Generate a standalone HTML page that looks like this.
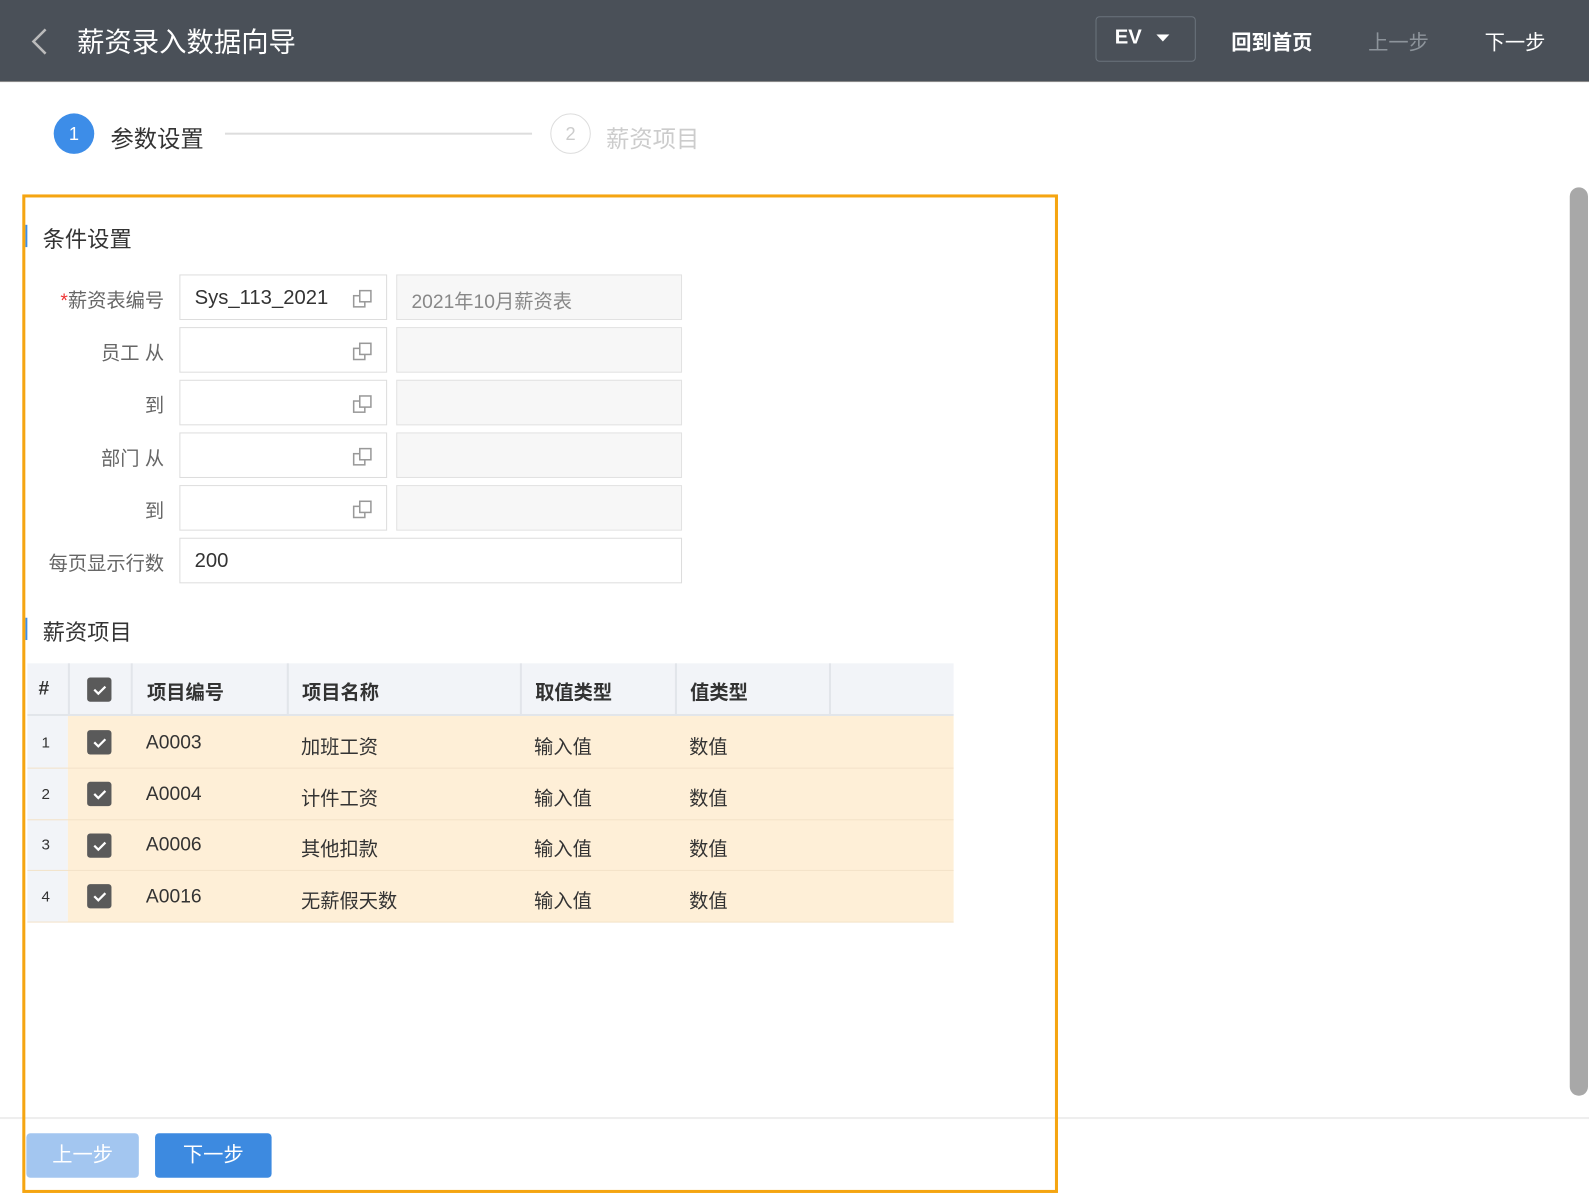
<!DOCTYPE html>
<html><head><meta charset="utf-8"><style>
html,body{margin:0;padding:0;width:1589px;height:1195px;overflow:hidden;background:#fff}
#w{position:absolute;left:0;top:0;width:1568px;height:1180px;transform:scale(1.0134,1.0127);transform-origin:0 0;font-family:"Liberation Sans","Noto Sans CJK SC",sans-serif;color:#333}
.a{position:absolute}
.hdr{left:0;top:0;width:1568px;height:80px;background:#4a5058;border-bottom:1px solid #888}
.ht{color:#fff;font-size:20px;top:26px}
.lbl{font-size:19px;color:#666;right:1406px;text-align:right;white-space:nowrap}
.in{border:1px solid #ddd;background:#fff;height:43px;box-sizing:border-box}
.in2{border:1px solid #e2e2e2;background:#f7f7f7;height:45px;box-sizing:border-box;width:282px;left:391px}
.cp{position:absolute;right:12px;top:13px;width:22px;height:20px}
.sec{font-size:22px;color:#333}
.bar{width:2px;height:22px;background:#3d8de8}
.cb{width:24px;height:24px;border-radius:3px;background:#5a5a5a}
.cell{font-size:19px;color:#333}
</style></head><body><div id="w">
<div class="a hdr"></div>
<svg class="a" style="left:28px;top:26px" width="22" height="30" viewBox="0 0 22 30"><path d="M17 3 L5 15 L17 27" stroke="#bbb" stroke-width="2.5" fill="none"/></svg>
<div class="a" style="left:76px;top:20px;color:#fff;font-size:27px">薪资录入数据向导</div>
<div class="a" style="left:1081px;top:16px;width:97px;height:43px;border:1px solid #6b737c;border-radius:4px"></div>
<div class="a ht" style="left:1100px;font-weight:bold">EV</div>
<svg class="a" style="left:1141px;top:34px" width="14" height="8"><path d="M0 0H13L6.5 7Z" fill="#fff"/></svg>
<div class="a ht" style="left:1215px;font-weight:bold">回到首页</div>
<div class="a ht" style="left:1350px;color:#8d949b">上一步</div>
<div class="a ht" style="left:1465px">下一步</div>

<div class="a" style="left:53px;top:112px;width:40px;height:40px;border-radius:50%;background:#3d8de8;color:#fff;font-size:18px;text-align:center;line-height:40px">1</div>
<div class="a" style="left:109px;top:118px;font-size:23px;color:#333">参数设置</div>
<div class="a" style="left:222px;top:131px;width:303px;height:2px;background:#ddd"></div>
<div class="a" style="left:543px;top:112px;width:38px;height:38px;border-radius:50%;border:1px solid #ddd;color:#ccc;font-size:18px;text-align:center;line-height:38px">2</div>
<div class="a" style="left:598px;top:118px;font-size:23px;color:#ccc">薪资项目</div>

<div class="a" style="left:1549px;top:185px;width:18px;height:897px;border-radius:9px;background:#a8a8a8"></div>
<div class="a" style="left:0;top:1103px;width:1568px;height:2px;background:#eee"></div>

<div class="a bar" style="left:25px;top:222px"></div>
<div class="a sec" style="left:42px;top:219px">条件设置</div>

<div class="a lbl" style="top:282px"><span style="color:#e33">*</span>薪资表编号</div>
<div class="a in" style="left:177px;top:271px;width:205px;height:45px"><span class="a" style="left:14px;top:11px;font-size:20px;color:#333">Sys_113_2021</span><svg class="cp" viewBox="0 0 22 20"><rect x="2" y="7" width="11" height="11" fill="none" stroke="#999" stroke-width="1.5"/><rect x="8" y="2" width="11" height="11" fill="#fff" stroke="#999" stroke-width="1.5"/></svg></div>
<div class="a in2" style="top:271px"><span class="a" style="left:14px;top:11px;font-size:19px;color:#888">2021年10月薪资表</span></div>

<div class="a lbl" style="top:334px">员工 从</div>
<div class="a in" style="left:177px;top:323px;width:205px;height:45px"><svg class="cp" viewBox="0 0 22 20"><rect x="2" y="7" width="11" height="11" fill="none" stroke="#999" stroke-width="1.5"/><rect x="8" y="2" width="11" height="11" fill="#fff" stroke="#999" stroke-width="1.5"/></svg></div>
<div class="a in2" style="top:323px"></div>

<div class="a lbl" style="top:386px">到</div>
<div class="a in" style="left:177px;top:375px;width:205px;height:45px"><svg class="cp" viewBox="0 0 22 20"><rect x="2" y="7" width="11" height="11" fill="none" stroke="#999" stroke-width="1.5"/><rect x="8" y="2" width="11" height="11" fill="#fff" stroke="#999" stroke-width="1.5"/></svg></div>
<div class="a in2" style="top:375px"></div>

<div class="a lbl" style="top:438px">部门 从</div>
<div class="a in" style="left:177px;top:427px;width:205px;height:45px"><svg class="cp" viewBox="0 0 22 20"><rect x="2" y="7" width="11" height="11" fill="none" stroke="#999" stroke-width="1.5"/><rect x="8" y="2" width="11" height="11" fill="#fff" stroke="#999" stroke-width="1.5"/></svg></div>
<div class="a in2" style="top:427px"></div>

<div class="a lbl" style="top:490px">到</div>
<div class="a in" style="left:177px;top:479px;width:205px;height:45px"><svg class="cp" viewBox="0 0 22 20"><rect x="2" y="7" width="11" height="11" fill="none" stroke="#999" stroke-width="1.5"/><rect x="8" y="2" width="11" height="11" fill="#fff" stroke="#999" stroke-width="1.5"/></svg></div>
<div class="a in2" style="top:479px"></div>

<div class="a lbl" style="top:542px">每页显示行数</div>
<div class="a in" style="left:177px;top:531px;width:496px;height:45px"><span class="a" style="left:14px;top:11px;font-size:20px;color:#333">200</span></div>

<div class="a bar" style="left:25px;top:610px"></div>
<div class="a sec" style="left:42px;top:607px">薪资项目</div>

<!-- table -->
<div class="a" style="left:27px;top:655px;width:914px;height:52px;background:#f2f4f8;border-bottom:2px solid #e2e5ea;box-sizing:border-box"></div>
<div class="a" style="left:27px;top:707px;width:40px;height:204px;background:#f2f4f8"></div>
<div class="a" style="left:67px;top:707px;width:874px;height:204px;background:#feefd7"></div>
<div class="a" style="left:27px;top:758px;width:914px;height:1px;background:#f3e2c8"></div>
<div class="a" style="left:27px;top:809px;width:914px;height:1px;background:#f3e2c8"></div>
<div class="a" style="left:27px;top:859px;width:914px;height:1px;background:#f3e2c8"></div>
<div class="a" style="left:27px;top:910px;width:914px;height:1px;background:#f3e2c8"></div>
<div class="a" style="left:67px;top:655px;width:2px;height:52px;background:#e2e5ea"></div>
<div class="a" style="left:129px;top:655px;width:2px;height:52px;background:#e2e5ea"></div>
<div class="a" style="left:283px;top:655px;width:2px;height:52px;background:#e2e5ea"></div>
<div class="a" style="left:513px;top:655px;width:2px;height:52px;background:#e2e5ea"></div>
<div class="a" style="left:666px;top:655px;width:2px;height:52px;background:#e2e5ea"></div>
<div class="a" style="left:818px;top:655px;width:2px;height:52px;background:#e2e5ea"></div>

<div class="a cell" style="left:38px;top:670px;font-weight:bold">#</div>
<div class="a cb" style="left:86px;top:669px"><svg width="24" height="24"><path d="M7 12l4 4 7-7" stroke="#fff" stroke-width="2.2" fill="none"/></svg></div>
<div class="a cell" style="left:145px;top:669px;font-weight:bold">项目编号</div>
<div class="a cell" style="left:298px;top:669px;font-weight:bold">项目名称</div>
<div class="a cell" style="left:528px;top:669px;font-weight:bold">取值类型</div>
<div class="a cell" style="left:681px;top:669px;font-weight:bold">值类型</div>

<div class="a" style="left:41px;top:725px;font-size:15px">1</div>
<div class="a cb" style="left:86px;top:721px"><svg width="24" height="24"><path d="M7 12l4 4 7-7" stroke="#fff" stroke-width="2.2" fill="none"/></svg></div>
<div class="a cell" style="left:144px;top:723px">A0003</div><div class="a cell" style="left:297px;top:723px">加班工资</div><div class="a cell" style="left:527px;top:723px">输入值</div><div class="a cell" style="left:680px;top:723px">数值</div>

<div class="a" style="left:41px;top:776px;font-size:15px">2</div>
<div class="a cb" style="left:86px;top:772px"><svg width="24" height="24"><path d="M7 12l4 4 7-7" stroke="#fff" stroke-width="2.2" fill="none"/></svg></div>
<div class="a cell" style="left:144px;top:774px">A0004</div><div class="a cell" style="left:297px;top:774px">计件工资</div><div class="a cell" style="left:527px;top:774px">输入值</div><div class="a cell" style="left:680px;top:774px">数值</div>

<div class="a" style="left:41px;top:826px;font-size:15px">3</div>
<div class="a cb" style="left:86px;top:823px"><svg width="24" height="24"><path d="M7 12l4 4 7-7" stroke="#fff" stroke-width="2.2" fill="none"/></svg></div>
<div class="a cell" style="left:144px;top:824px">A0006</div><div class="a cell" style="left:297px;top:824px">其他扣款</div><div class="a cell" style="left:527px;top:824px">输入值</div><div class="a cell" style="left:680px;top:824px">数值</div>

<div class="a" style="left:41px;top:877px;font-size:15px">4</div>
<div class="a cb" style="left:86px;top:873px"><svg width="24" height="24"><path d="M7 12l4 4 7-7" stroke="#fff" stroke-width="2.2" fill="none"/></svg></div>
<div class="a cell" style="left:144px;top:875px">A0016</div><div class="a cell" style="left:297px;top:875px">无薪假天数</div><div class="a cell" style="left:527px;top:875px">输入值</div><div class="a cell" style="left:680px;top:875px">数值</div>

<div class="a" style="left:26px;top:1119px;width:111px;height:44px;border-radius:4px;background:#a3c6f0;color:#fff;font-size:20px;text-align:center;line-height:44px">上一步</div>
<div class="a" style="left:153px;top:1119px;width:115px;height:44px;border-radius:4px;background:#3d8ae0;color:#fff;font-size:20px;text-align:center;line-height:44px">下一步</div>

<div class="a" style="left:22px;top:192px;width:1022px;height:986px;border:3px solid #f5a511;box-sizing:border-box"></div>
</div></body></html>
